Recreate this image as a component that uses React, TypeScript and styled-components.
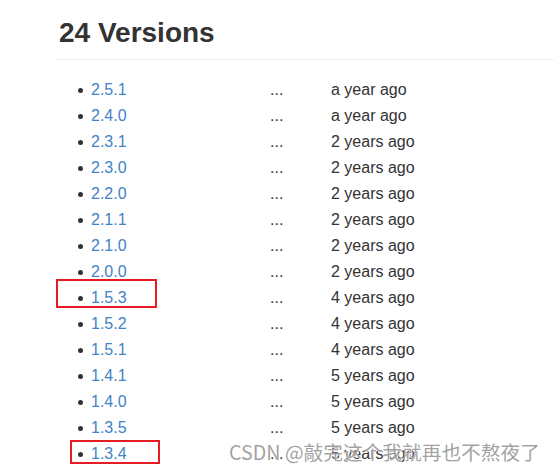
import React from "react";
import styled, { createGlobalStyle } from "styled-components";

const Global = createGlobalStyle`
  html, body { margin: 0; padding: 0; background: #fff; }
  body { font-family: "Liberation Sans", Arial, sans-serif; color: #333; }
`;

const Page = styled.div`
  position: relative;
  width: 554px;
  height: 470px;
  overflow: hidden;
  background: #fff;
`;

const Section = styled.section`
  margin-left: 56px;
`;

const Heading = styled.h2`
  margin: 0;
  padding: 16px 0 9px 3px;
  font-size: 28px;
  line-height: 34px;
  font-weight: 700;
  color: #333;
  border-bottom: 1px solid #eeeeee;
`;

const List = styled.ul`
  list-style: none;
  margin: 17px 0 0;
  padding: 0;
`;

const Row = styled.li`
  display: flex;
  align-items: center;
  height: 26px;
  padding-left: 22px;
  font-size: 16px;
  line-height: 26px;
`;

const Bullet = styled.span`
  width: 5px;
  height: 5px;
  border-radius: 50%;
  background: #333;
  margin-right: 8px;
  flex: none;
`;

const VersionLink = styled.a`
  width: 179px;
  color: #4183c4;
  text-decoration: none;
  flex: none;
`;

const Dots = styled.span`
  width: 61px;
  color: #333;
  flex: none;
`;

const Age = styled.span`
  color: #333;
`;

const Highlight = styled.div<{ $x: number; $y: number; $w: number; $h: number }>`
  position: absolute;
  left: ${(p) => p.$x}px;
  top: ${(p) => p.$y}px;
  width: ${(p) => p.$w}px;
  height: ${(p) => p.$h}px;
  border: 2px solid #e51c23;
  box-sizing: border-box;
`;

const Watermark = styled.div`
  position: absolute;
  left: 229px;
  top: 439px;
  font-family: "Noto Sans CJK SC", "Liberation Sans", sans-serif;
  font-size: 19.7px;
  line-height: 26px;
  color: rgba(130, 130, 130, 0.75);
  text-shadow: 0 0 1px #fff, 1px 1px 1px rgba(255, 255, 255, 0.8);
  white-space: nowrap;
`;

const versions: [string, string][] = [
  ["2.5.1", "a year ago"],
  ["2.4.0", "a year ago"],
  ["2.3.1", "2 years ago"],
  ["2.3.0", "2 years ago"],
  ["2.2.0", "2 years ago"],
  ["2.1.1", "2 years ago"],
  ["2.1.0", "2 years ago"],
  ["2.0.0", "2 years ago"],
  ["1.5.3", "4 years ago"],
  ["1.5.2", "4 years ago"],
  ["1.5.1", "4 years ago"],
  ["1.4.1", "5 years ago"],
  ["1.4.0", "5 years ago"],
  ["1.3.5", "5 years ago"],
  ["1.3.4", "5 years ago"],
];

export default function App() {
  return (
    <Page>
      <Global />
      <Section>
        <Heading>24 Versions</Heading>
        <List>
          {versions.map(([v, age]) => (
            <Row key={v}>
              <Bullet />
              <VersionLink href="#">{v}</VersionLink>
              <Dots>...</Dots>
              <Age>{age}</Age>
            </Row>
          ))}
        </List>
      </Section>
      <Highlight $x={56} $y={279} $w={101} $h={29} />
      <Highlight $x={70} $y={440} $w={90} $h={24} />
      <Watermark>CSDN @敲完这个我就再也不熬夜了</Watermark>
    </Page>
  );
}
